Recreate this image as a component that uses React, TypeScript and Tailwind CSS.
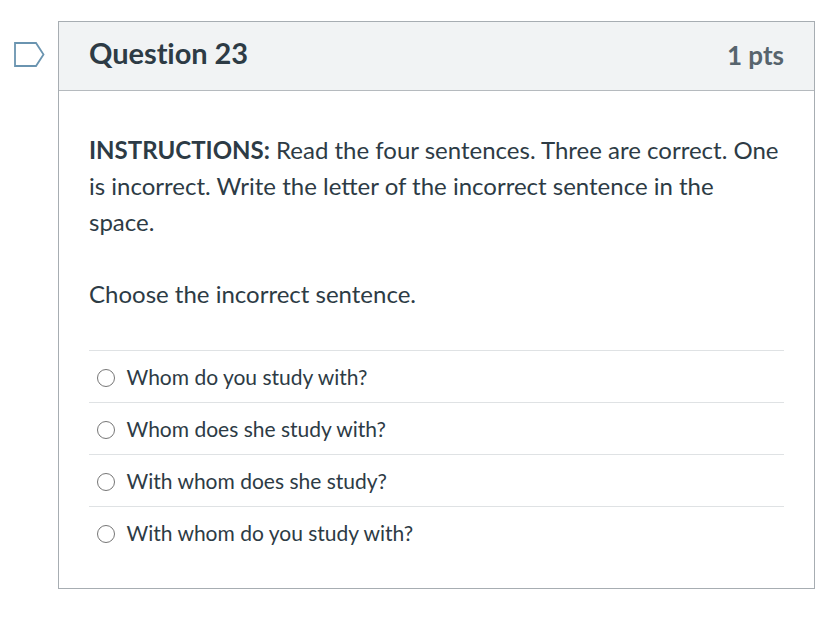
export default function App() {
  const answers = [
    "Whom do you study with?",
    "Whom does she study with?",
    "With whom does she study?",
    "With whom do you study with?",
  ];

  return (
    <div className="w-[834px] h-[632px] bg-white text-[#2d3b45] font-['Lato',sans-serif] flex items-start pt-[21px] pl-[14px]">
      <svg className="w-[31px] h-[25px] mt-[21px] mr-[13px] shrink-0" viewBox="0 0 31 25" fill="none">
        <path d="M1 1H22L29.5 12.5L22 24H1V1Z" stroke="#6a94b0" strokeWidth="1.8" />
      </svg>
      <div className="w-[757px] h-[568px] border border-[#a7adb2] flex flex-col">
        <div className="h-[69px] bg-[#f1f3f4] border-b border-[#b5babe] flex items-center justify-between px-[30px] pb-[6px]">
          <h2 className="text-[29px] font-bold tracking-[-0.05px]">Question 23</h2>
          <span className="text-[26px] font-bold text-[#57646d] mt-[4px]">1 pts</span>
        </div>
        <div className="px-[30px] pt-[41px]">
          <p className="text-[24px] leading-[36px]">
            <strong>INSTRUCTIONS:</strong> Read the four sentences. Three are correct. One is incorrect. Write the letter of the incorrect sentence in the space.
          </p>
          <p className="text-[24px] leading-[36px] mt-[36px]">Choose the incorrect sentence.</p>
          <div className="mt-[38px]">
            {answers.map((a) => (
              <div key={a} className="h-[52px] border-t border-[#dfe2e4] flex items-center pl-[8px]">
                <span className="w-[18px] h-[18px] rounded-full border-[1.5px] border-[#767676] mr-[12px] mt-[2px]"></span>
                <span className="text-[21px] ml-[-0.5px]">{a}</span>
              </div>
            ))}
          </div>
        </div>
      </div>
    </div>
  );
}
